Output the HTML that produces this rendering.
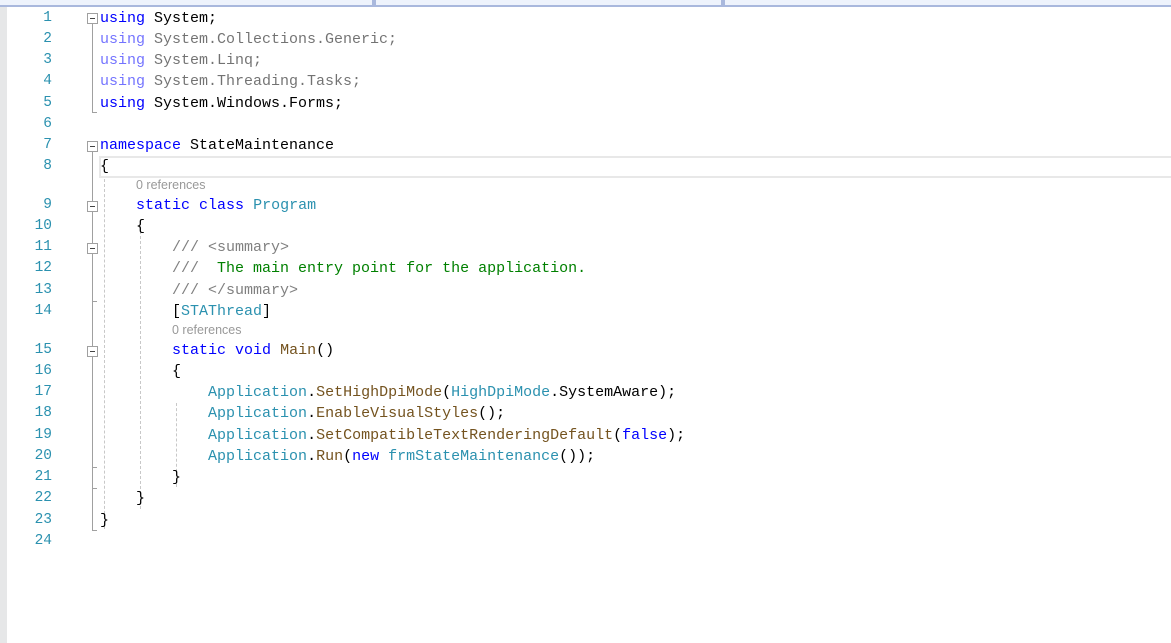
<!DOCTYPE html>
<html><head><meta charset="utf-8"><style>
html,body{margin:0;padding:0;background:#fff;width:1171px;height:643px;overflow:hidden;position:relative}
.l{position:absolute;left:100px;height:21px;line-height:21px;font-family:"Liberation Mono",monospace;font-size:15px;white-space:pre;color:#000}
.n{position:absolute;width:52px;text-align:right;left:0;height:21px;line-height:21px;font-family:"Liberation Mono",monospace;font-size:14.5px;color:#2b91af}
.k{color:#0000ff}.t{color:#2b91af}.m{color:#74531f}.c{color:#008000}.g{color:#808080}
.f{opacity:.55}
.cl{position:absolute;font-family:"Liberation Sans",sans-serif;font-size:12.5px;color:#999}
.box{position:absolute;left:87px;width:9px;height:9px;border:1px solid #a0a0a0;background:#fff}
.box:after{content:"";position:absolute;left:2px;top:4px;width:5px;height:1px;background:#444}
.v{position:absolute;width:1px;background:#a0a0a0}
.h{position:absolute;height:1px;width:5px;background:#a0a0a0}
.d{position:absolute;width:0;border-left:1px dashed #c8c8c8}
</style></head><body>
<div style="position:absolute;left:0;top:0;width:1171px;height:5px;background:#eef3fc;border-bottom:2px solid #a9b8dd"></div>
<div style="position:absolute;left:372px;top:0;width:4px;height:6px;background:#a9b8dd"></div>
<div style="position:absolute;left:721px;top:0;width:4px;height:6px;background:#a9b8dd"></div>
<div style="position:absolute;left:0;top:7px;width:7px;height:636px;background:#e6e7e8"></div>
<div style="position:absolute;left:99px;top:156px;width:1072px;height:18px;border:2px solid #e8e8e8;border-right:none"></div>

<div class="v" style="left:92px;top:23px;height:90px"></div><div class="h" style="left:92px;top:112px"></div>
<div class="v" style="left:92px;top:151px;height:380px"></div><div class="h" style="left:92px;top:530px"></div>
<div class="h" style="left:92px;top:488px"></div>
<div class="h" style="left:92px;top:301px"></div>
<div class="h" style="left:92px;top:467px"></div>
<div class="d" style="left:104px;top:179px;height:350px"></div>
<div class="d" style="left:140px;top:221px;height:288px"></div>
<div class="d" style="left:176px;top:403px;height:84px"></div>
<div class="box" style="top:13px"></div>
<div class="box" style="top:141px"></div>
<div class="box" style="top:201px"></div>
<div class="box" style="top:243px"></div>
<div class="box" style="top:346px"></div>

<div class="n" style="top:8px">1</div><div class="l" style="top:8px"><span class="k">using</span> System;</div>
<div class="n" style="top:29px">2</div><div class="l f" style="top:29px"><span class="k">using</span> System.Collections.Generic;</div>
<div class="n" style="top:50px">3</div><div class="l f" style="top:50px"><span class="k">using</span> System.Linq;</div>
<div class="n" style="top:71px">4</div><div class="l f" style="top:71px"><span class="k">using</span> System.Threading.Tasks;</div>
<div class="n" style="top:93px">5</div><div class="l" style="top:93px"><span class="k">using</span> System.Windows.Forms;</div>
<div class="n" style="top:114px">6</div>
<div class="n" style="top:135px">7</div><div class="l" style="top:135px"><span class="k">namespace</span> StateMaintenance</div>
<div class="n" style="top:156px">8</div><div class="l" style="top:156px">{</div>
<div class="cl" style="left:136px;top:178px">0 references</div>
<div class="n" style="top:195px">9</div><div class="l" style="top:195px">    <span class="k">static</span> <span class="k">class</span> <span class="t">Program</span></div>
<div class="n" style="top:216px">10</div><div class="l" style="top:216px">    {</div>
<div class="n" style="top:237px">11</div><div class="l" style="top:237px">        <span class="g">/// &lt;summary&gt;</span></div>
<div class="n" style="top:258px">12</div><div class="l" style="top:258px">        <span class="g">///</span><span class="c">  The main entry point for the application.</span></div>
<div class="n" style="top:280px">13</div><div class="l" style="top:280px">        <span class="g">/// &lt;/summary&gt;</span></div>
<div class="n" style="top:301px">14</div><div class="l" style="top:301px">        [<span class="t">STAThread</span>]</div>
<div class="cl" style="left:172px;top:323px">0 references</div>
<div class="n" style="top:340px">15</div><div class="l" style="top:340px">        <span class="k">static</span> <span class="k">void</span> <span class="m">Main</span>()</div>
<div class="n" style="top:361px">16</div><div class="l" style="top:361px">        {</div>
<div class="n" style="top:382px">17</div><div class="l" style="top:382px">            <span class="t">Application</span>.<span class="m">SetHighDpiMode</span>(<span class="t">HighDpiMode</span>.SystemAware);</div>
<div class="n" style="top:403px">18</div><div class="l" style="top:403px">            <span class="t">Application</span>.<span class="m">EnableVisualStyles</span>();</div>
<div class="n" style="top:425px">19</div><div class="l" style="top:425px">            <span class="t">Application</span>.<span class="m">SetCompatibleTextRenderingDefault</span>(<span class="k">false</span>);</div>
<div class="n" style="top:446px">20</div><div class="l" style="top:446px">            <span class="t">Application</span>.<span class="m">Run</span>(<span class="k">new</span> <span class="t">frmStateMaintenance</span>());</div>
<div class="n" style="top:467px">21</div><div class="l" style="top:467px">        }</div>
<div class="n" style="top:488px">22</div><div class="l" style="top:488px">    }</div>
<div class="n" style="top:510px">23</div><div class="l" style="top:510px">}</div>
<div class="n" style="top:531px">24</div>
</body></html>
